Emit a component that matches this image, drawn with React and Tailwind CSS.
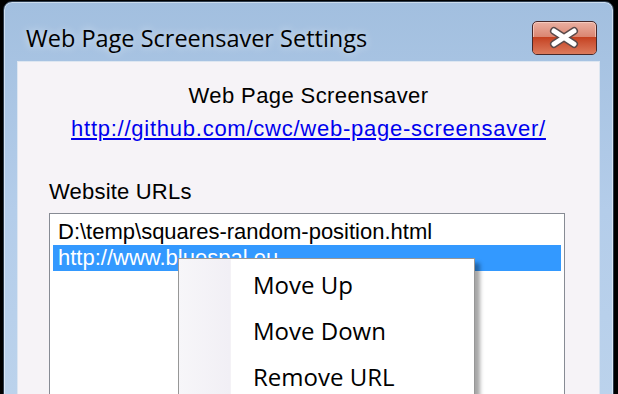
import React from "react";

const sans = { fontFamily: '"Liberation Sans", Arial, sans-serif' };
const ui = { fontFamily: '"Open Sans", "Noto Sans", sans-serif' };

function CloseButton() {
  return (
    <div className="relative w-[65px] h-[34px] rounded-[5px] border border-[#47292a] overflow-hidden bg-gradient-to-b from-[#eab0a2] via-[#d9826d] to-[#c94a2e] shadow-[inset_0_0_0_1px_rgba(255,220,210,0.6)]">
      <div className="absolute left-0 right-0 bottom-0 h-[17px] bg-gradient-to-b from-[#c4401f] to-[#dc7a5c]" />
      <svg className="absolute left-0 top-0" width="63" height="32" viewBox="0 0 63 32">
        <g strokeLinecap="round">
          <path d="M21 9 L41 22 M21 22 L41 9" stroke="#5a4a4a" strokeWidth="8" />
          <path d="M21 9 L41 22 M21 22 L41 9" stroke="#ffffff" strokeWidth="5" />
        </g>
      </svg>
    </div>
  );
}

export default function App() {
  return (
    <div className="w-[618px] h-[394px] bg-black overflow-hidden pt-[1px] pl-[3px]">
      <div className="relative w-[611px] h-[420px] rounded-t-[9px] border border-[#2b3a4b] bg-gradient-to-b from-[#a2bfdf] via-[#b4cdea] to-[#bcd3ec] flex flex-col px-[13px] shadow-[inset_0_0_0_1px_rgba(255,255,255,0.45)]">
        <div className="h-[59px] shrink-0 flex items-center justify-between">
          <span
            className="ml-[9px] mt-[14px] text-[23.5px] text-black leading-none [text-shadow:0_0_8px_rgba(255,255,255,0.7)]"
            style={ui}
          >
            Web Page Screensaver Settings
          </span>
          <div className="mr-[3px] mt-[13px]">
            <CloseButton />
          </div>
        </div>
        <div className="flex-1 bg-[#f6f3f7] border-t border-l border-r border-[#dde6f1] flex flex-col" style={sans}>
          <div className="mt-[21px] text-center text-[22px] leading-[26px] text-black tracking-[0.4px]">
            Web Page Screensaver
          </div>
          <div className="mt-[7px] text-center text-[22px] leading-[26px] text-[#0000ee] underline tracking-[0.75px] underline-offset-2">
            http://github.com/cwc/web-page-screensaver/
          </div>
          <div className="mt-[37px] ml-[31px] text-[22px] leading-[26px] text-black tracking-[0.2px]">
            Website URLs
          </div>
          <div className="relative mt-[8px] ml-[31px] w-[516px] h-[200px] border border-[#878b94] bg-white px-[3px] pt-[4px]">
            <div className="h-[27px] pl-[5px] text-[22px] leading-[27px] text-black whitespace-nowrap">
              D:\temp\squares-random-position.html
            </div>
            <div className="h-[26px] pl-[5px] text-[22px] leading-[26px] text-white bg-[#3399ff] whitespace-nowrap">
              http://www.bluespal.eu
            </div>
            <div
              className="absolute left-[128px] top-[44px] w-[297px] h-[160px] border border-[#979797] bg-white flex shadow-[5px_5px_4px_rgba(0,0,0,0.35)]"
              style={ui}
            >
              <div className="w-[52px] h-full bg-gradient-to-r from-[#f7f6f9] to-[#f1eff5] border-r border-[#f4f2f6]" />
              <div className="flex flex-col pt-[3px] pl-[22px] text-[24px] text-black">
                <div className="h-[46px] leading-[46px]">Move Up</div>
                <div className="h-[46px] leading-[46px]">Move Down</div>
                <div className="h-[46px] leading-[46px]">Remove URL</div>
              </div>
            </div>
          </div>
        </div>
      </div>
    </div>
  );
}
